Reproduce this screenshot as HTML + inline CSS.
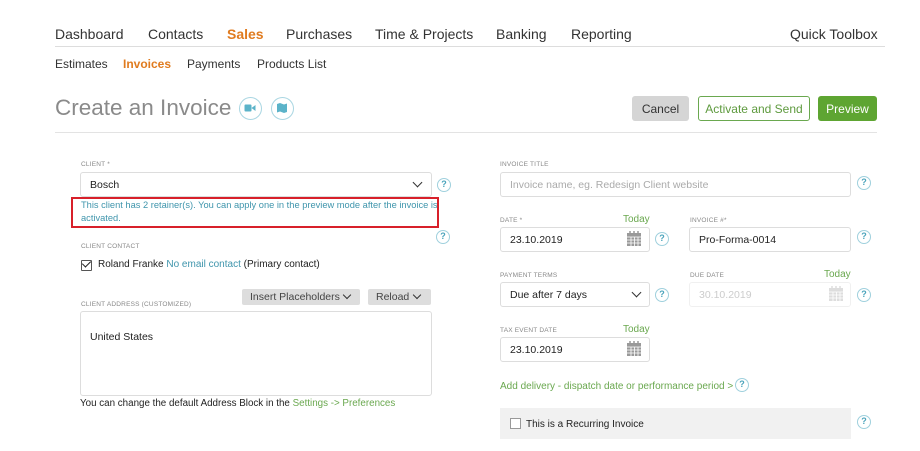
<!DOCTYPE html>
<html><head><meta charset="utf-8"><style>
*{box-sizing:border-box;margin:0;padding:0}
body{width:920px;height:451px;background:#fff;font-family:"Liberation Sans",sans-serif;color:#333;position:relative;overflow:hidden}
.a{position:absolute;white-space:nowrap}
.nav{font-size:14px;color:#333;top:26px}
.sub{font-size:12px;color:#333;top:57px}
.lbl{font-size:6.5px;color:#888;letter-spacing:.2px;text-transform:uppercase}
.inp{position:absolute;border:1px solid #ddd;border-radius:3px;background:#fff;font-size:10.5px;padding-left:9px;display:flex;align-items:center;color:#222}
.help{position:absolute;width:14px;height:14px;border:1.5px solid #9fd0dd;border-radius:50%;color:#4aa3bb;font-size:9px;font-weight:bold;text-align:center;line-height:11px}
.today{font-size:10px;color:#6aa84f}
.chev{position:absolute;width:7px;height:7px;border-right:1.6px solid #333;border-bottom:1.6px solid #333;transform:rotate(45deg)}
.gbtn{position:absolute;background:#ddd;border-radius:2px;font-size:10.5px;color:#444;padding-left:8px;display:flex;align-items:center}
.btn{position:absolute;display:flex;align-items:center;justify-content:center;font-size:12px;border-radius:3px}
</style></head><body>
<div class="a nav" style="left:55px">Dashboard</div>
<div class="a nav" style="left:148px">Contacts</div>
<div class="a nav" style="left:227px;color:#e07b1f;font-weight:bold">Sales</div>
<div class="a nav" style="left:286px">Purchases</div>
<div class="a nav" style="left:375px">Time &amp; Projects</div>
<div class="a nav" style="left:496px">Banking</div>
<div class="a nav" style="left:571px">Reporting</div>
<div class="a nav" style="left:790px">Quick Toolbox</div>
<div class="a" style="left:55px;top:46px;width:830px;height:1px;background:#ddd"></div>
<div class="a sub" style="left:55px">Estimates</div>
<div class="a sub" style="left:123px;color:#e07b1f;font-weight:bold">Invoices</div>
<div class="a sub" style="left:187px">Payments</div>
<div class="a sub" style="left:257px">Products List</div>

<div class="a" style="left:55px;top:95px;font-size:22.5px;color:#8a8a8a">Create an Invoice</div>
<div class="a" style="left:239px;top:97px;width:23px;height:23px;border:1.5px solid #a9d6e2;border-radius:50%"><svg width="20" height="20" viewBox="0 0 20 20"><rect x="4.5" y="6.5" width="7" height="7" rx="1" fill="#5bb3c9"/><path d="M11.5 10 L15.5 7 L15.5 13Z" fill="#5bb3c9"/></svg></div>
<div class="a" style="left:271px;top:97px;width:23px;height:23px;border:1.5px solid #a9d6e2;border-radius:50%"><svg width="20" height="20" viewBox="0 0 20 20"><path d="M5 6 L8 5 L12 6.5 L15 5.5 L15 14 L12 15 L8 13.5 L5 14.5Z" fill="#5bb3c9"/></svg></div>

<div class="btn" style="left:632px;top:96px;width:57px;height:25px;background:#d5d5d5;color:#333">Cancel</div>
<div class="btn" style="left:698px;top:96px;width:112px;height:25px;border:1px solid #6aa84f;color:#5e9a3e">Activate and Send</div>
<div class="btn" style="left:818px;top:96px;width:59px;height:25px;background:#5ea532;color:#fff">Preview</div>
<div class="a" style="left:55px;top:132px;width:822px;height:1px;background:#e3e3e3"></div>

<div class="a lbl" style="left:81px;top:161px">Client *</div>
<div class="inp" style="left:80px;top:172px;width:352px;height:25px">Bosch</div>
<div class="chev" style="left:414px;top:179px"></div>
<div class="help" style="left:437px;top:178px">?</div>
<div class="a" style="left:71px;top:197px;width:368px;height:31px;border:2.5px solid #d8202a"></div>
<div class="a" style="left:81px;top:199px;font-size:9.3px;color:#3f95ac;line-height:12.5px;white-space:normal;width:360px">This client has 2 retainer(s). You can apply one in the preview mode after the invoice is activated.</div>
<div class="help" style="left:436px;top:230px">?</div>
<div class="a lbl" style="left:81px;top:243px">Client contact</div>
<div class="a" style="left:81px;top:260px;width:11px;height:11px;border:1px solid #555;border-radius:1px"></div>
<div class="a" style="left:84px;top:259px;width:5px;height:8px;border-right:1.6px solid #222;border-bottom:1.6px solid #222;transform:rotate(45deg)"></div>
<div class="a" style="left:98px;top:259px;font-size:10px;color:#222">Roland Franke <span style="color:#3f95ac">No email contact</span> (Primary contact)</div>

<div class="gbtn" style="left:242px;top:289px;width:118px;height:16px">Insert Placeholders</div>
<div class="chev" style="left:344px;top:292px;width:6px;height:6px"></div>
<div class="gbtn" style="left:368px;top:289px;width:63px;height:16px">Reload</div>
<div class="chev" style="left:414px;top:292px;width:6px;height:6px"></div>
<div class="a lbl" style="left:81px;top:301px">Client address (customized)</div>
<div class="inp" style="left:80px;top:311px;width:352px;height:85px;align-items:flex-start;padding-top:19px">United States</div>
<div class="a" style="left:80px;top:398px;font-size:9.8px;color:#222">You can change the default Address Block in the <span style="color:#6aa84f">Settings -&gt; Preferences</span></div>

<div class="a lbl" style="left:500px;top:161px">Invoice title</div>
<div class="inp" style="left:500px;top:172px;width:351px;height:25px;color:#aaa">Invoice name, eg. Redesign Client website</div>
<div class="help" style="left:857px;top:176px">?</div>

<div class="a lbl" style="left:500px;top:217px">Date *</div>
<div class="a today" style="left:623px;top:214px">Today</div>
<div class="inp" style="left:500px;top:227px;width:150px;height:25px">23.10.2019</div>
<svg class="a" style="left:626px;top:230px" width="16" height="17" viewBox="0 0 16 17"><rect x="1" y="3" width="14" height="13" fill="#999"/><path d="M4 1v4M8 1v4M12 1v4" stroke="#999" stroke-width="1.5"/><path d="M1 7h14M1 10h14M1 13h14M5 7v9M8.5 7v9M12 7v9" stroke="#fff" stroke-width=".8"/></svg>
<div class="help" style="left:655px;top:232px">?</div>
<div class="a lbl" style="left:690px;top:217px">Invoice #*</div>
<div class="inp" style="left:689px;top:227px;width:162px;height:25px">Pro-Forma-0014</div>
<div class="help" style="left:857px;top:230px">?</div>

<div class="a lbl" style="left:500px;top:272px">Payment terms</div>
<div class="inp" style="left:500px;top:282px;width:150px;height:25px">Due after 7 days</div>
<div class="chev" style="left:633px;top:289px"></div>
<div class="help" style="left:655px;top:288px">?</div>
<div class="a lbl" style="left:690px;top:272px">Due date</div>
<div class="a today" style="left:824px;top:269px">Today</div>
<div class="inp" style="left:689px;top:282px;width:162px;height:25px;border-color:#f0f0f0;color:#ccc">30.10.2019</div>
<svg class="a" style="left:828px;top:285px" width="16" height="17" viewBox="0 0 16 17"><rect x="1" y="3" width="14" height="13" fill="#ddd"/><path d="M4 1v4M8 1v4M12 1v4" stroke="#ddd" stroke-width="1.5"/><path d="M1 7h14M1 10h14M1 13h14M5 7v9M8.5 7v9M12 7v9" stroke="#fff" stroke-width=".8"/></svg>
<div class="help" style="left:857px;top:288px">?</div>

<div class="a lbl" style="left:500px;top:327px">Tax event date</div>
<div class="a today" style="left:623px;top:324px">Today</div>
<div class="inp" style="left:500px;top:337px;width:150px;height:25px">23.10.2019</div>
<svg class="a" style="left:626px;top:340px" width="16" height="17" viewBox="0 0 16 17"><rect x="1" y="3" width="14" height="13" fill="#999"/><path d="M4 1v4M8 1v4M12 1v4" stroke="#999" stroke-width="1.5"/><path d="M1 7h14M1 10h14M1 13h14M5 7v9M8.5 7v9M12 7v9" stroke="#fff" stroke-width=".8"/></svg>

<div class="a" style="left:500px;top:381px;font-size:10px;color:#6aa84f">Add delivery - dispatch date or performance period &gt;</div>
<div class="help" style="left:735px;top:378px">?</div>

<div class="a" style="left:500px;top:408px;width:351px;height:31px;background:#f1f1f1"></div>
<div class="a" style="left:510px;top:418px;width:11px;height:11px;border:1px solid #999;background:#fff"></div>
<div class="a" style="left:526px;top:419px;font-size:10px;color:#222">This is a Recurring Invoice</div>
<div class="help" style="left:857px;top:415px">?</div>
</body></html>
